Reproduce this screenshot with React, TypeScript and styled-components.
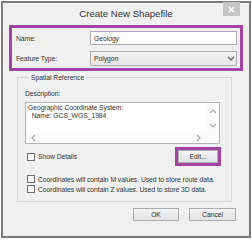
import { createGlobalStyle, styled } from 'styled-components'

const GlobalStyle = createGlobalStyle`
	html, body {
		margin: 0;
		padding: 0;
		background: #ffffff;
	}
	body {
		font-family: 'Liberation Sans', Arial, sans-serif;
		font-size: 6.8px;
		letter-spacing: -0.05px;
		color: #333333;
		white-space: nowrap;
	}
`

type ChevronProps = { dir: 'up' | 'down' | 'left' | 'right'; color?: string }

function Chevron({ dir, color = '#a8a8a8' }: ChevronProps) {
	const points = {
		up: '1,5 4,2 7,5',
		down: '1,2 4,5 7,2',
		left: '5,1 2,4 5,7',
		right: '2,1 5,4 2,7',
	}[dir]
	return (
		<svg width="8" height="8" viewBox="0 0 8 8">
			<polyline points={points} fill="none" stroke={color} strokeWidth="1.1" />
		</svg>
	)
}

export default function App() {
	return (
		<>
			<GlobalStyle />
			<Window>
				<TitleBar>
					<span />
					<Title>Create New Shapefile</Title>
					<CloseButton>
						<svg width="7" height="7" viewBox="0 0 7 7">
							<path d="M1 1 L6 6 M6 1 L1 6" stroke="#ffffff" strokeWidth="1.6" />
						</svg>
					</CloseButton>
				</TitleBar>

				<Body>
					<Highlight>
						<FieldRow>
							<Label>Name:</Label>
							<TextInput>Geology</TextInput>
						</FieldRow>
						<FieldRow>
							<Label>Feature Type:</Label>
							<Select>
								<span>Polygon</span>
								<Chevron dir="down" color="#555" />
							</Select>
						</FieldRow>
					</Highlight>

					<Group>
						<Legend>Spatial Reference</Legend>
						<Label>Description:</Label>
						<DescriptionBox>
							<DescriptionText>
								Geographic Coordinate System:
								<br />
								&nbsp;&nbsp;Name: GCS_WGS_1984
							</DescriptionText>
							<VScroll>
								<Chevron dir="up" />
								<Chevron dir="down" />
							</VScroll>
							<HScroll>
								<Chevron dir="left" />
								<Chevron dir="right" />
							</HScroll>
							<Corner />
						</DescriptionBox>

						<DetailsRow>
							<CheckRow>
								<CheckBox />
								<span>Show Details</span>
							</CheckRow>
							<HighlightButton>
								<Button>Edit...</Button>
							</HighlightButton>
						</DetailsRow>

						<CheckList>
							<CheckRow>
								<CheckBox />
								<span>Coordinates will contain M values. Used to store route data.</span>
							</CheckRow>
							<CheckRow>
								<CheckBox />
								<span>Coordinates will contain Z values. Used to store 3D data.</span>
							</CheckRow>
						</CheckList>
					</Group>

					<Footer>
						<Button $width={46}>OK</Button>
						<Button $width={47}>Cancel</Button>
					</Footer>
				</Body>
			</Window>
		</>
	)
}

const Window = styled.div`
	box-sizing: border-box;
	margin: 1px 0 0 1px;
	width: 250px;
	height: 237px;
	border: 2px solid #7b7b7b;
	background: #f0f0f0;
	display: flex;
	flex-direction: column;
`
const TitleBar = styled.div`
	height: 22px;
	display: grid;
	grid-template-columns: 1fr auto 1fr;
	align-items: center;
`
const Title = styled.div`
	font-size: 9.6px;
	color: #333;
	letter-spacing: 0;
	margin-top: -1px;
`
const CloseButton = styled.div`
	justify-self: end;
	align-self: start;
	margin: -1px 9px 0 0;
	width: 17px;
	height: 14px;
	background: #c6c6c6;
	display: flex;
	align-items: center;
	justify-content: center;
`
const Body = styled.div`
	flex: 1;
	display: flex;
	flex-direction: column;
	padding: 0 6px;
`
const Highlight = styled.div`
	box-sizing: border-box;
	height: 46px;
	border: 3px solid #a346a3;
	padding: 3px 3px 2px 4px;
	display: flex;
	flex-direction: column;
	gap: 6px;
`
const FieldRow = styled.div`
	display: grid;
	grid-template-columns: 74px 1fr;
	align-items: center;
`
const Label = styled.div`
	color: #333333;
`
const TextInput = styled.div`
	box-sizing: border-box;
	height: 14px;
	border: 1px solid #abadb3;
	background: #ffffff;
	padding: 0 3px;
	display: flex;
	align-items: center;
`
const Select = styled.div`
	box-sizing: border-box;
	height: 15px;
	border: 1px solid #acacac;
	background: linear-gradient(#f2f2f2, #e6e6e6);
	padding: 0 1px 0 3px;
	display: flex;
	align-items: center;
	justify-content: space-between;
`
const Group = styled.fieldset`
	margin: 3px 11px 0 8px;
	padding: 9px 10px 7px 7px;
	border: 1px solid #d6d6d6;
	display: flex;
	flex-direction: column;
	min-width: 0;
`
const Legend = styled.legend`
	padding: 0 2px;
	margin-left: 4px;
`
const DescriptionBox = styled.div`
	box-sizing: border-box;
	margin-top: 5px;
	margin-right: 1px;
	height: 42px;
	border: 1px solid #b4b4b4;
	background: #ffffff;
	display: grid;
	grid-template-columns: 1fr 12px;
	grid-template-rows: 1fr 10px;
`
const DescriptionText = styled.div`
	padding: 1px 2px;
	line-height: 8px;
`
const VScroll = styled.div`
	background: #fafafa;
	display: flex;
	flex-direction: column;
	justify-content: space-between;
	align-items: center;
	padding: 5px 0 3px;
`
const HScroll = styled.div`
	background: #fafafa;
	display: flex;
	justify-content: space-between;
	align-items: center;
	padding: 0 4px;
`
const Corner = styled.div`
	background: #fafafa;
`
const DetailsRow = styled.div`
	margin-top: 3px;
	display: flex;
	align-items: center;
	justify-content: space-between;
`
const CheckRow = styled.div`
	display: flex;
	align-items: center;
	gap: 3px;
	padding-left: 2px;
	height: 10px;
`
const CheckBox = styled.div`
	box-sizing: border-box;
	width: 8px;
	height: 8px;
	border: 1px solid #707070;
	background: #ffffff;
`
const HighlightButton = styled.div`
	border: 3px solid #a346a3;
`
const Button = styled.div<{ $width?: number }>`
	box-sizing: border-box;
	width: ${({ $width }) => $width ?? 40}px;
	height: 13px;
	border: 1px solid #adadad;
	background: linear-gradient(#f3f3f3, #e3e3e3);
	display: flex;
	align-items: center;
	justify-content: center;
`
const CheckList = styled.div`
	margin-top: 8px;
	display: flex;
	flex-direction: column;
`
const Footer = styled.div`
	margin-top: 6px;
	display: flex;
	justify-content: flex-end;
	gap: 10px;
	padding-right: 7px;
`
